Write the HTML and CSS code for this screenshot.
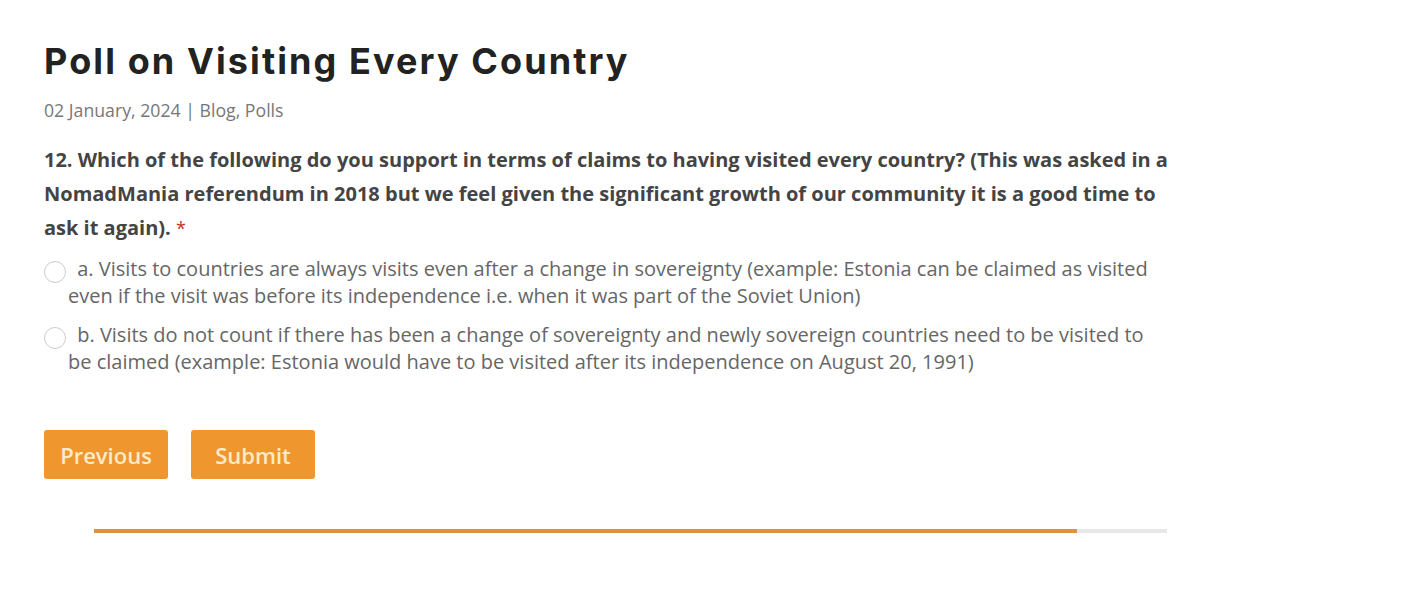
FILE: index.html
```html
<!DOCTYPE html>
<html lang="en">
<head>
<meta charset="utf-8">
<title>Poll on Visiting Every Country</title>
<link rel="stylesheet" href="styles.css">
</head>
<body>
<main class="page">
  <h1 class="title">Poll on Visiting Every Country</h1>
  <div class="meta">02 January, 2024 | Blog, Polls</div>
  <form class="poll">
    <p class="question">12. Which of the following do you support in terms of claims to having visited every country? (This was asked in a NomadMania referendum in 2018 but we feel given the significant growth of our community it is a good time to ask it again). <span class="req">*</span></p>
    <label class="option"><span class="radio"></span> a. Visits to countries are always visits even after a change in sovereignty (example: Estonia can be claimed as visited even if the visit was before its independence i.e. when it was part of the Soviet Union)</label>
    <label class="option"><span class="radio"></span> b. Visits do not count if there has been a change of sovereignty and newly sovereign countries need to be visited to be claimed (example: Estonia would have to be visited after its independence on August 20, 1991)</label>
    <div class="buttons">
      <button type="button" class="btn">Previous</button>
      <button type="button" class="btn">Submit</button>
    </div>
    <div class="progress"><div class="progress-fill" style="width: 91.6%"></div></div>
  </form>
</main>
</body>
</html>
```
FILE: styles.css
```css
* { box-sizing: border-box; }
html, body { margin: 0; padding: 0; background: #fff; }
body { font-family: "Open Sans", "Liberation Sans", sans-serif; color: #555; }
.page { padding: 38px 0 0 44px; width: 1170px; }
.title {
  margin: 0;
  font-family: "Inter", "Noto Sans", sans-serif;
  font-weight: 700;
  font-size: 36px;
  line-height: 46px;
  color: #222;
  letter-spacing: 2.1px;
}
.meta { margin-top: 16px; font-size: 17.7px; line-height: 20px; color: #777; }
.poll { margin-top: 23px; }
.question {
  margin: 0;
  font-size: 20px;
  line-height: 34px;
  font-weight: 700;
  color: #444;
}
.req { color: #c9302c; font-weight: 400; font-size: 18px; }
.option {
  display: block;
  padding-left: 24px;
  text-indent: -24px;
  font-size: 20px;
  line-height: 26px;
  color: #666;
  margin-top: 11px;
}
.option + .option { margin-top: 13px; }
.radio {
  display: inline-block;
  width: 22px;
  height: 22px;
  border: 1px solid #ccc;
  border-radius: 50%;
  vertical-align: -7px;
  margin-right: 6px;
  text-indent: 0;
}
.buttons { display: flex; gap: 23px; margin-top: 55px; }
.btn {
  background: #f0962f;
  color: #fdebc8;
  border: none;
  border-radius: 3px;
  width: 124px;
  height: 49px;
  font-family: "Open Sans", sans-serif;
  font-size: 22px;
  font-weight: 600;
  padding: 0;
}
.progress { margin: 50px 0 0 50px; width: 1073px; height: 4px; background: #e8e8e8; }
.progress-fill { height: 100%; background: #e0913a; }
```
